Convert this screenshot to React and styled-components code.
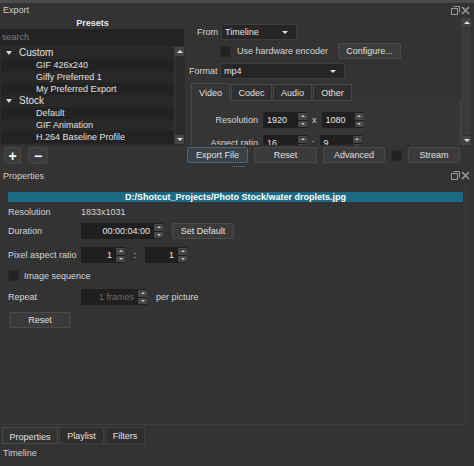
import React from 'react';
import styled, { createGlobalStyle } from 'styled-components';

const GlobalStyle = createGlobalStyle`
  html, body { margin: 0; padding: 0; background: #333333; }
  body {
    font-family: "Liberation Sans", Arial, sans-serif;
    font-size: 9px;
    color: #d6d6d6;
    overflow: hidden;
  }
  * { box-sizing: border-box; }
`

const Window = styled.div`
  width: 474px;
  height: 466px;
  display: flex;
  flex-direction: column;
  background: #333333;
  border-top: 3px solid #4b4b4b;
  overflow: hidden;
`

const DockTitle = styled.div`
  height: ${p => p.h || 14}px;
  display: flex;
  align-items: center;
  justify-content: space-between;
  padding: 0 4px 0 3px;
  color: #d0d0d0;
  flex-shrink: 0;
`

const TitleIcons = styled.div`
  display: flex;
  gap: 1px;
  opacity: 0.75;
`

const ExportBody = styled.div`
  height: 148px;
  display: flex;
  flex-shrink: 0;
`

const PresetsCol = styled.div`
  width: 185px;
  display: flex;
  flex-direction: column;
`

const PresetsHead = styled.div`
  height: 12px;
  line-height: 12px;
  text-align: center;
  font-weight: bold;
  color: #e8e8e8;
`

const Search = styled.div`
  height: 17px;
  background: #232323;
  color: #7a7a7a;
  padding-left: 2px;
  line-height: 17px;
  margin-right: 1px;
`

const Tree = styled.div`
  height: 99px;
  display: flex;
  background: #262626;
  border: 1px solid #2c2c2c;
`

const TreeRows = styled.div`
  flex: 1;
  display: flex;
  flex-direction: column;
`

const TreeRow = styled.div`
  height: 12px;
  line-height: 12px;
  display: flex;
  align-items: center;
  padding-left: ${p => (p.child ? 35 : 5)}px;
  background: ${p => (p.alt ? '#222222' : '#282828')};
  color: #e2e2e2;
  font-size: ${p => (p.child ? 9 : 10)}px;
  gap: 7px;
`

const Caret = styled.span`
  width: 0;
  height: 0;
  border-left: 3.5px solid transparent;
  border-right: 3.5px solid transparent;
  border-top: 4px solid #d8d8d8;
`

const ScrollBar = styled.div`
  width: 10px;
  display: flex;
  flex-direction: column;
  justify-content: space-between;
  background: #2e2e2e;
  border-left: 1px solid #3a3a3a;
  margin: ${p => p.m || '0'};
`

const ScrollArrow = styled.div`
  height: 9px;
  background: #444;
  display: flex;
  align-items: center;
  justify-content: center;
  &::after {
    content: '';
    border-left: 3px solid transparent;
    border-right: 3px solid transparent;
    ${p => (p.down ? 'border-top: 3px solid #ddd;' : 'border-bottom: 3px solid #ddd;')}
  }
`

const ScrollThumb = styled.div`
  flex: 1;
  margin: 1px 0;
  background: ${p => p.bg || 'transparent'};
`

const PlusMinusRow = styled.div`
  display: flex;
  gap: 7px;
  padding: 2px 0 0 4px;
`

const SquareBtn = styled.div`
  width: ${p => p.w || 17}px;
  height: 17px;
  background: #3c3c3c;
  border: 1px solid #464646;
  border-radius: 2px;
  display: flex;
  align-items: center;
  justify-content: center;
  color: #fff;
  font-weight: bold;
  font-size: 14px;
`

const RightCol = styled.div`
  flex: 1;
  display: flex;
  flex-direction: column;
  margin-left: 2px;
`

const RightScroll = styled.div`
  height: 128px;
  display: flex;
`

const RightContent = styled.div`
  flex: 1;
  overflow: hidden;
  padding-top: 7px;
`

const FormRow = styled.div`
  display: flex;
  align-items: center;
  height: ${p => p.h || 16}px;
  margin-bottom: ${p => p.mb || 0}px;
  padding-left: ${p => p.pl || 0}px;
  gap: ${p => p.gap || 3}px;
  flex-shrink: 0;
`

const Label = styled.span`
  width: ${p => (p.w ? p.w + 'px' : 'auto')};
  text-align: ${p => p.align || 'left'};
  margin-left: ${p => p.ml || 0}px;
  color: #d6d6d6;
  white-space: nowrap;
  flex-shrink: 0;
`

const Combo = styled.div`
  width: ${p => p.w}px;
  height: 16px;
  background: #262626;
  border: 1px solid #3d3d3d;
  border-radius: 2px;
  display: flex;
  align-items: center;
  justify-content: space-between;
  padding: 0 8px 0 3px;
  color: #e4e4e4;
  &::after {
    content: '';
    border-left: 3px solid transparent;
    border-right: 3px solid transparent;
    border-top: 3px solid #e0e0e0;
  }
`

const Check = styled.div`
  width: 11px;
  height: 11px;
  background: #222;
  border: 1px solid #2a2a2a;
  flex-shrink: 0;
`

const Button = styled.div`
  width: ${p => p.w}px;
  height: ${p => p.h || 16}px;
  background: ${p => (p.focus ? '#3a4247' : '#3b3b3b')};
  border: 1px solid ${p => (p.focus ? '#4e6470' : '#4a4a4a')};
  border-radius: 2px;
  display: flex;
  align-items: center;
  justify-content: center;
  color: #e0e0e0;
  flex-shrink: 0;
  margin-left: ${p => p.ml || 0}px;
`

const TabBar = styled.div`
  display: flex;
  gap: 1px;
  padding-left: 4px;
  margin-top: 4px;
`

const Tab = styled.div`
  width: ${p => p.w}px;
  display: flex;
  align-items: center;
  justify-content: center;
  background: ${p => (p.active ? '#353535' : '#2e2e2e')};
  border: 1px solid #474747;
  border-bottom: ${p => (p.active ? 'none' : '1px solid #474747')};
  color: #e0e0e0;
  margin-top: ${p => (p.active ? 0 : 1)}px;
  height: ${p => (p.active ? 18 : 17)}px;
`

const TabPane = styled.div`
  margin-left: 4px;
  border: 1px solid #474747;
  border-top: none;
  height: 60px;
  padding-top: 11px;
  background: #353535;
`

const Spin = styled.div`
  width: ${p => p.w}px;
  height: 16px;
  display: flex;
  background: #1f1f1f;
  flex-shrink: 0;
`

const SpinValue = styled.div`
  flex: 1;
  display: flex;
  align-items: center;
  justify-content: ${p => (p.right ? 'flex-end' : 'flex-start')};
  padding: 0 4px;
  color: ${p => (p.dim ? '#6e6e6e' : '#e6e6e6')};
`

const SpinArrows = styled.div`
  width: 9px;
  display: flex;
  flex-direction: column;
  gap: 1px;
  padding: 1px 0;
`

const SpinArrow = styled.div`
  flex: 1;
  background: #464646;
  border-radius: 1px;
  display: flex;
  align-items: center;
  justify-content: center;
  &::after {
    content: '';
    border-left: 2.5px solid transparent;
    border-right: 2.5px solid transparent;
    ${p => (p.down ? 'border-top: 2.5px solid #ccc;' : 'border-bottom: 2.5px solid #ccc;')}
  }
`

const BottomButtons = styled.div`
  display: flex;
  align-items: center;
  padding-top: 2px;
  gap: 6px;
`

const Handle = styled.div`
  height: 3px;
  display: flex;
  padding-left: 232px;
  align-items: center;
  flex-shrink: 0;
  &::after {
    content: '';
    width: 13px;
    border-top: 1px dotted #777;
  }
`

const PropsBody = styled.div`
  height: 242px;
  margin-right: 8px;
  border-right: 1px solid #3c3c3c;
  border-bottom: 1px solid #3c3c3c;
  padding: 9px 0 0 8px;
  display: flex;
  flex-direction: column;
  flex-shrink: 0;
`

const PathBar = styled.div`
  height: 10px;
  margin-right: 2px;
  background: #1d6a87;
  color: #fff;
  font-weight: bold;
  font-size: 9px;
  display: flex;
  align-items: center;
  justify-content: center;
  margin-bottom: 4px;
  flex-shrink: 0;
`

const BottomTabs = styled.div`
  display: flex;
  padding: 2px 0 0 2px;
  gap: 1px;
  height: 20px;
  flex-shrink: 0;
`

const DockTab = styled.div`
  width: ${p => p.w}px;
  height: 17px;
  display: flex;
  align-items: center;
  justify-content: center;
  background: ${p => (p.active ? '#333' : '#2e2e2e')};
  border: 1px solid ${p => (p.active ? '#4a4a4a' : '#3e3e3e')};
  padding-top: ${p => (p.active ? 2 : 0)}px;
  color: #e0e0e0;
`

const DockIcons = () => (
  <TitleIcons>
    <svg width="9" height="9" viewBox="0 0 9 9">
      <rect x="0.5" y="2.5" width="6" height="6" fill="none" stroke="#bbb" />
      <path d="M2.5 0.5 H8.5 V6.5" fill="none" stroke="#bbb" />
    </svg>
    <svg width="9" height="9" viewBox="0 0 9 9">
      <path d="M1 1 L8 8 M8 1 L1 8" stroke="#bbb" strokeWidth="1.6" />
    </svg>
  </TitleIcons>
)

const SpinBox = ({ w, value, right, dim }) => (
  <Spin w={w}>
    <SpinValue right={right} dim={dim}>{value}</SpinValue>
    <SpinArrows>
      <SpinArrow />
      <SpinArrow down />
    </SpinArrows>
  </Spin>
)

const presets = [
  { name: 'Custom', group: true },
  { name: 'GIF 426x240' },
  { name: 'Giffy Preferred 1' },
  { name: 'My Preferred Export' },
  { name: 'Stock', group: true },
  { name: 'Default' },
  { name: 'GIF Animation' },
  { name: 'H.264 Baseline Profile' },
]

export default function App() {
  return (
    <Window>
      <GlobalStyle />
      <DockTitle>
        <span>Export</span>
        <DockIcons />
      </DockTitle>
      <ExportBody>
        <PresetsCol>
          <PresetsHead>Presets</PresetsHead>
          <Search>search</Search>
          <Tree>
            <TreeRows>
              {presets.map((p, i) => (
                <TreeRow key={p.name} child={!p.group} alt={i % 2 === 1}>
                  {p.group && <Caret />}
                  {p.name}
                </TreeRow>
              ))}
            </TreeRows>
            <ScrollBar>
              <ScrollArrow />
              <ScrollThumb bg="#2a2a2a" />
              <ScrollArrow down />
            </ScrollBar>
          </Tree>
          <PlusMinusRow>
            <SquareBtn>+</SquareBtn>
            <SquareBtn w={20}>−</SquareBtn>
          </PlusMinusRow>
        </PresetsCol>
        <RightCol>
          <RightScroll>
            <RightContent>
              <FormRow mb={3} pl={10}>
                <Label w={21}>From</Label>
                <Combo w={76}>Timeline</Combo>
              </FormRow>
              <FormRow mb={4} pl={33} gap={6}>
                <Check />
                <Label>Use hardware encoder</Label>
                <Button w={63} ml={4}>Configure...</Button>
              </FormRow>
              <FormRow pl={2} gap={3}>
                <Label w={28}>Format</Label>
                <Combo w={125}>mp4</Combo>
              </FormRow>
              <TabBar>
                <Tab w={39} active>Video</Tab>
                <Tab w={41}>Codec</Tab>
                <Tab w={39}>Audio</Tab>
                <Tab w={39}>Other</Tab>
              </TabBar>
              <TabPane>
                <FormRow mb={7} gap={5}>
                  <Label w={66} align="right">Resolution</Label>
                  <SpinBox w={44} value="1920" />
                  <Label>x</Label>
                  <SpinBox w={42} value="1080" />
                </FormRow>
                <FormRow gap={5}>
                  <Label w={66} align="right">Aspect ratio</Label>
                  <SpinBox w={44} value="16" />
                  <Label>:</Label>
                  <SpinBox w={42} value="9" />
                </FormRow>
              </TabPane>
            </RightContent>
            <ScrollBar m="1px 3px 0 0">
              <ScrollArrow />
              <ScrollThumb bg="#3a3a3a" />
              <ScrollArrow down />
            </ScrollBar>
          </RightScroll>
          <BottomButtons>
            <Button w={61} focus>Export File</Button>
            <Button w={63}>Reset</Button>
            <Button w={62}>Advanced</Button>
            <Check />
            <Button w={52}>Stream</Button>
          </BottomButtons>
        </RightCol>
      </ExportBody>
      <Handle />
      <DockTitle h={15}>
        <span>Properties</span>
        <DockIcons />
      </DockTitle>
      <PropsBody>
        <PathBar>D:/Shotcut_Projects/Photo Stock/water droplets.jpg</PathBar>
        <FormRow h={12} mb={5} gap={0}>
          <Label w={70}>Resolution</Label>
          <Label>1833x1031</Label>
        </FormRow>
        <FormRow mb={8} gap={0}>
          <Label w={70}>Duration</Label>
          <SpinBox w={82} value="00:00:04:00" right />
          <Button w={62} ml={6}>Set Default</Button>
        </FormRow>
        <FormRow mb={7} gap={0}>
          <Label w={70}>Pixel aspect ratio</Label>
          <SpinBox w={44} value="1" right />
          <Label w={14} align="center">:</Label>
          <SpinBox w={42} value="1" right />
        </FormRow>
        <FormRow h={11} mb={8} gap={5}>
          <Check />
          <Label>Image sequence</Label>
        </FormRow>
        <FormRow mb={7} gap={0}>
          <Label w={70}>Repeat</Label>
          <SpinBox w={66} value="1 frames" right dim />
          <Label ml={6}>per picture</Label>
        </FormRow>
        <Button w={62} ml={1}>Reset</Button>
      </PropsBody>
      <BottomTabs>
        <DockTab w={56} active>Properties</DockTab>
        <DockTab w={45}>Playlist</DockTab>
        <DockTab w={40}>Filters</DockTab>
      </BottomTabs>
      <DockTitle h={16}>
        <span>Timeline</span>
      </DockTitle>
    </Window>
  );
}
